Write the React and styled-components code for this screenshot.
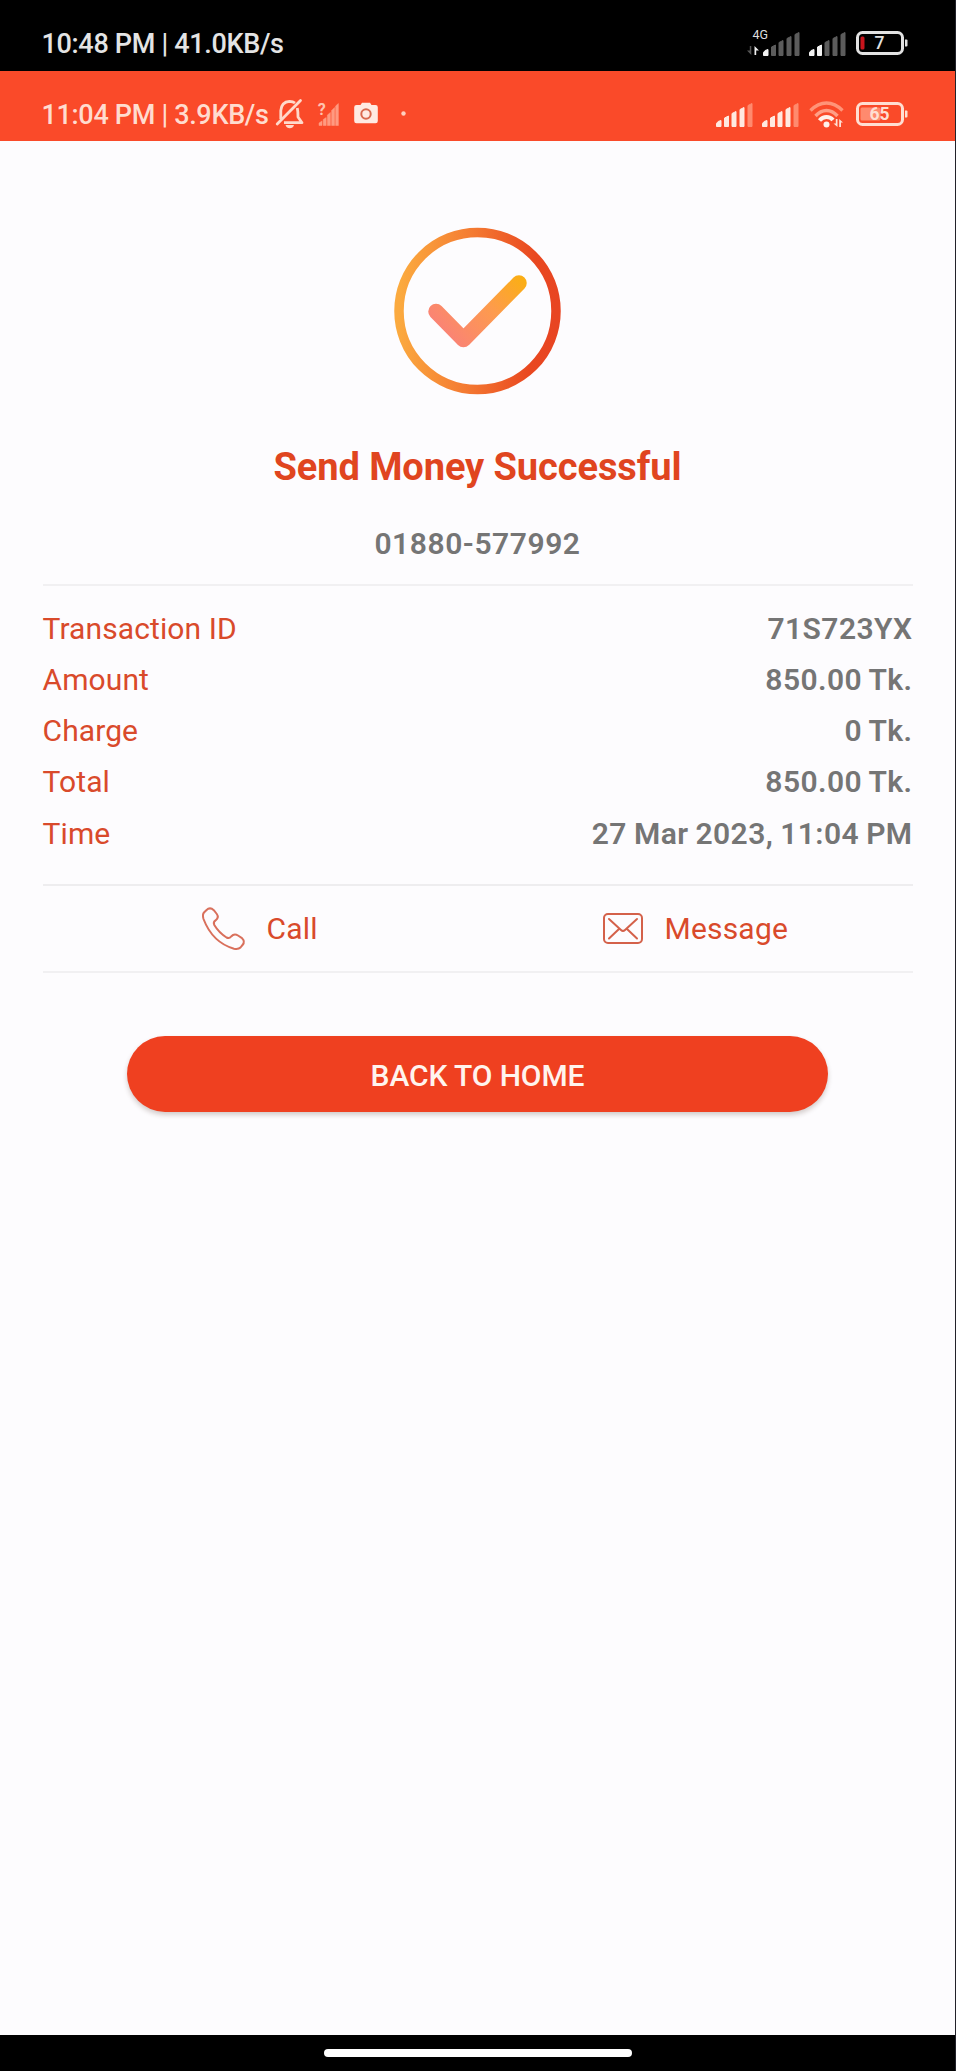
import styled, { createGlobalStyle } from 'styled-components'

const GlobalStyle = createGlobalStyle`
  body {
    margin: 0;
    background: #fdfcfe;
    font-family: Roboto, "Liberation Sans", sans-serif;
  }

  svg {
    display: block;
    flex-shrink: 0;
    overflow: visible;
  }
`;

const Screen = styled.div`
  display: flex;
  flex-direction: column;
  box-sizing: border-box;
  width: 956px;
  height: 2071px;
  overflow: hidden;
  border-right: 1px solid #22222a;
`;

const StatusBar = styled.div`
  display: flex;
  justify-content: space-between;
  box-sizing: border-box;
  height: ${props => props.height}px;
  padding: ${props => props.top}px 47px 0 41.5px;
  background: ${props => props.background};
  color: ${props => props.color};
`;

const StatusGroup = styled.div`
  display: flex;
  align-items: flex-start;
`;

const StatusText = styled.div`
  width: ${props => props.width}px;
  font-size: 27px;
  font-weight: 500;
  line-height: 33px;
  letter-spacing: -0.32px;
  white-space: nowrap;
`;

const IconSlot = styled.div`
  margin-left: ${props => props.gap || 0}px;
  padding-top: ${props => props.top || 0}px;
`;

const Content = styled.main`
  display: flex;
  flex: 1;
  flex-direction: column;
  align-items: center;
  padding: 86px 43px 0;
`;

const Title = styled.h1`
  margin: 47px 0 0;
  color: #e0451f;
  font-size: 38px;
  font-weight: 700;
  line-height: 50px;
  letter-spacing: -0.08px;
`;

const Phone = styled.div`
  margin-top: 32px;
  color: #757575;
  font-size: 30px;
  font-weight: 600;
  line-height: 40px;
  letter-spacing: 0.55px;
`;

const Details = styled.dl`
  box-sizing: border-box;
  width: 870px;
  height: 302px;
  margin: 20px 0 0;
  padding-top: 16.5px;
  border-top: 2px solid #f1f0f2;
  border-bottom: 2px solid #eeedef;
`;

const Row = styled.div`
  display: flex;
  justify-content: space-between;
  height: 51.3px;
  font-size: 30px;
  line-height: 52px;
`;

const Label = styled.dt`
  color: #d94a2b;
  letter-spacing: 0.1px;
`;

const Value = styled.dd`
  margin: 0;
  color: #757575;
  font-weight: 600;
  letter-spacing: 0.42px;
  word-spacing: -0.8px;
`;

const Actions = styled.div`
  display: grid;
  grid-template-columns: 1fr 1fr;
  box-sizing: border-box;
  width: 870px;
  height: 87px;
  border-bottom: 2px solid #f1f0f2;
`;

const Action = styled.button`
  display: flex;
  align-items: center;
  gap: ${props => props.gap}px;
  padding: 0 0 0 ${props => props.indent}px;
  border: 0;
  background: none;
  color: #d94a2b;
  font: 400 30px/40px Roboto, "Liberation Sans", sans-serif;
  letter-spacing: 0.2px;
`;

const HomeButton = styled.button`
  width: 701px;
  height: 76px;
  margin-top: 63px;
  padding: 3px 0 0;
  border: 0;
  border-radius: 38px;
  background: #ef4020;
  box-shadow: 0 3px 5px rgba(60, 30, 20, 0.22);
  color: #fff4ee;
  font: 500 30px/40px Roboto, "Liberation Sans", sans-serif;
  letter-spacing: -0.1px;
`;

const NavBar = styled.div`
  display: flex;
  justify-content: center;
  box-sizing: border-box;
  height: 36px;
  padding-top: 14px;
  background: #000;
`;

const NavHandle = styled.div`
  width: 308px;
  height: 8px;
  border-radius: 4px;
  background: #fff;
`;

const bars = [
  'M.5 23.5V20.5Q1.5 18 5 17.5V23.5Z',
  'M8.5 23.5V15L12.5 13V23.5Z',
  'M16 23.5V10.5L20 8.5V23.5Z',
  'M24 23.5V6.5L28 4.5V23.5Z',
  'M32 23.5V2.5L36 .5V23.5Z'
]

function Signal({ active, color, dim }) {
  return (
    <svg width="37" height="24" viewBox="0 0 37 24">
      {bars.map((d, index) => (
        <path
          key={index}
          d={d}
          fill={index < active ? color : dim}
          stroke={index < active ? color : dim}
          strokeWidth="1"
          strokeLinejoin="round"
        />
      ))}
    </svg>
  )
}

function Battery({ level, color, fill, fillWidth, weight }) {
  return (
    <svg width="52" height="24" viewBox="0 0 52 24">
      <rect x="1.5" y="1.5" width="45" height="21" rx="5" fill="none" stroke={color} strokeWidth="3" />
      <rect x="4.5" y="5.5" width={fillWidth} height="13" rx="1.5" fill={fill} />
      <path d="M49 8.5h1.5q1 0 1 1v5q0 1-1 1H49z" fill={color} />
      <text x="23.5" y="18.3" textAnchor="middle" fill={color} fontSize="17.5" fontWeight={weight}>{level}</text>
    </svg>
  )
}

function MobileData() {
  return (
    <svg width="22" height="26" viewBox="0 0 22 26">
      <text x="5.5" y="9.3" fill="#dedede" fontSize="12.5">4G</text>
      <path d="M4.3 16v9L0 20.5h2.8V16z" fill="#555" />
      <path d="M7.5 25v-9l4.5 4.5H9.2V25z" fill="#eee" />
    </svg>
  )
}

function BellOff() {
  return (
    <svg width="28" height="30" viewBox="0 0 28 30" fill="none" stroke="#ffd9ca" strokeWidth="2.8">
      <path d="M4.8 20V11.5Q5.5 2.8 13.5 2.3Q17 2.4 19 4" />
      <path d="M21.3 9Q22 12 22 18L26 23.7H8" strokeLinejoin="round" />
      <path d="M1.2 25L24.5 1.5" strokeLinecap="round" />
      <path d="M9.5 26h8.5q-1 3.2-4.2 3.2T9.5 26z" fill="#ffd9ca" stroke="none" />
    </svg>
  )
}

function NoSim() {
  return (
    <svg width="21" height="24" viewBox="0 0 21 24">
      <text x="-.3" y="12.5" fill="#ffc3b0" fontSize="16" fontWeight="700">?</text>
      <g fill="#ff9a80" stroke="#ff9a80" strokeWidth=".5">
        <path d="M1 23.5v-2.5l3-2v4.5z" />
        <path d="M5.2 23.5v-6l3-2v8z" />
        <path d="M9.4 23.5V13l3-2.5v13z" />
        <path d="M13.6 23.5V8.5l3-3v18z" />
        <path d="M17.6 23.5V4l2.8-2.5v22z" />
      </g>
    </svg>
  )
}

function Camera() {
  return (
    <svg width="24" height="22" viewBox="0 0 24 22">
      <path d="M2.5 3H6.5L8 .8H16L17.5 3H21.5Q23.8 3 23.8 5.3V19Q23.8 21.3 21.5 21.3H2.5Q.2 21.3 .2 19V5.3Q.2 3 2.5 3z" fill="#ffeae2" />
      <circle cx="12" cy="12" r="4.7" fill="none" stroke="#d9694f" strokeWidth="2" />
    </svg>
  )
}

function Wifi() {
  return (
    <svg width="36" height="27" viewBox="0 0 36 27" fill="none" strokeWidth="3.4">
      <path d="M1.5 9.5Q9 2 17.5 2T33.5 9.5" stroke="#ff9478" />
      <path d="M6.5 15Q11.5 9.5 17.5 9.5T28.5 15" stroke="#ff9f86" />
      <path d="M10.5 19.5Q13.5 16 17.5 16T24 19" stroke="#fff1ea" strokeWidth="4" />
      <circle cx="17.5" cy="23.5" r="3" fill="#fff1ea" />
      <path d="M28.5 18v8l-4-3.5h2.3V18zM30.2 26v-8l3.8 3.5h-2V26z" fill="#ffe0d4" />
    </svg>
  )
}

function SuccessIcon() {
  return (
    <svg width="168" height="168" viewBox="0 0 168 168" fill="none">
      <defs>
        <linearGradient id="ring" x1="0" y1=".45" x2="1" y2=".5">
          <stop offset="0" stopColor="#fbaa3f" />
          <stop offset=".45" stopColor="#f47a32" />
          <stop offset=".85" stopColor="#e94820" />
          <stop offset="1" stopColor="#e84522" />
        </linearGradient>
        <linearGradient id="check" gradientUnits="userSpaceOnUse" x1="60" y1="117" x2="128" y2="53">
          <stop offset="0" stopColor="#fa8375" />
          <stop offset=".55" stopColor="#fd9b4d" />
          <stop offset="1" stopColor="#fbae16" />
        </linearGradient>
      </defs>
      <circle cx="83.5" cy="84" r="78.5" stroke="url(#ring)" strokeWidth="9.5" />
      <path d="M42 84.5L69.5 112.5L125 56" stroke="url(#check)" strokeWidth="15.5" strokeLinecap="round" strokeLinejoin="round" />
    </svg>
  )
}

function PhoneIcon() {
  return (
    <svg width="43" height="43" viewBox="0 0 43 43" fill="none" stroke="#d9705c" strokeWidth="2" strokeLinejoin="round">
      <path d="M4.3 3.2Q8-.4 11.8 3.2L14.8 7Q17.2 10.5 13.8 13.2Q10.8 15 12.3 18Q16.8 25.5 24.5 30.5Q27.3 32 29.2 29.5Q32.2 26 36 28.5L40 31.2Q43.5 34.3 40.5 38L38.5 40.5Q36.5 42.5 32 41.7Q10.5 35.5 1.5 12Q.2 7.5 2 5.5z" />
    </svg>
  )
}

function MailIcon() {
  return (
    <svg width="40" height="31" viewBox="0 0 40 31" fill="none" stroke="#d4614a" strokeWidth="2" strokeLinecap="round">
      <rect x="1" y="1" width="38" height="29" rx="4" />
      <path d="M6 6L18 17Q20 18.8 22 17L34 6M6 25.5L16 16M34 25.5L24 16" />
    </svg>
  )
}

const details = [
  { label: 'Transaction ID', value: '71S723YX' },
  { label: 'Amount', value: '850.00 Tk.' },
  { label: 'Charge', value: '0 Tk.' },
  { label: 'Total', value: '850.00 Tk.' },
  { label: 'Time', value: '27 Mar 2023, 11:04 PM' }
]

function App() {
  return (
    <Screen>
      <GlobalStyle />
      <StatusBar height={71} top={28} background="#000" color="#e4e4e4">
        <StatusText>10:48 PM | 41.0KB/s</StatusText>
        <StatusGroup>
          <IconSlot top={2}><MobileData /></IconSlot>
          <IconSlot gap={-6} top={3.5}><Signal active={1} color="#f2f2f2" dim="#5c5c5c" /></IconSlot>
          <IconSlot gap={9} top={3.5}><Signal active={2} color="#f2f2f2" dim="#5c5c5c" /></IconSlot>
          <IconSlot gap={10} top={3}><Battery level="7" color="#e2e2e2" fill="#c8141c" fillWidth={4} weight={500} /></IconSlot>
        </StatusGroup>
      </StatusBar>
      <StatusBar height={70} top={28} background="#fa4a29" color="#ffdccf">
        <StatusGroup>
          <StatusText width={234}>11:04 PM | 3.9KB/s</StatusText>
          <IconSlot><BellOff /></IconSlot>
          <IconSlot gap={14} top={2.5}><NoSim /></IconSlot>
          <IconSlot gap={15} top={2.5}><Camera /></IconSlot>
          <IconSlot gap={23} top={12}>
            <svg width="5" height="5"><circle cx="2.5" cy="2.5" r="2.2" fill="#ffd0bf" /></svg>
          </IconSlot>
        </StatusGroup>
        <StatusGroup>
          <IconSlot top={3.5}><Signal active={4} color="#ffe9e0" dim="#ff8a6e" /></IconSlot>
          <IconSlot gap={9} top={3.5}><Signal active={4} color="#ffe9e0" dim="#ff8a6e" /></IconSlot>
          <IconSlot gap={10} top={2}><Wifi /></IconSlot>
          <IconSlot gap={11} top={3}><Battery level="65" color="#ffded2" fill="#ff8a6e" fillWidth={20} weight={700} /></IconSlot>
        </StatusGroup>
      </StatusBar>
      <Content>
        <SuccessIcon />
        <Title>Send Money Successful</Title>
        <Phone>01880-577992</Phone>
        <Details>
          {details.map(item => (
            <Row key={item.label}>
              <Label>{item.label}</Label>
              <Value>{item.value}</Value>
            </Row>
          ))}
        </Details>
        <Actions>
          <Action indent={159} gap={22}><PhoneIcon />Call</Action>
          <Action indent={125} gap={22}><MailIcon />Message</Action>
        </Actions>
        <HomeButton>BACK TO HOME</HomeButton>
      </Content>
      <NavBar>
        <NavHandle />
      </NavBar>
    </Screen>
  );
}
export default App;
